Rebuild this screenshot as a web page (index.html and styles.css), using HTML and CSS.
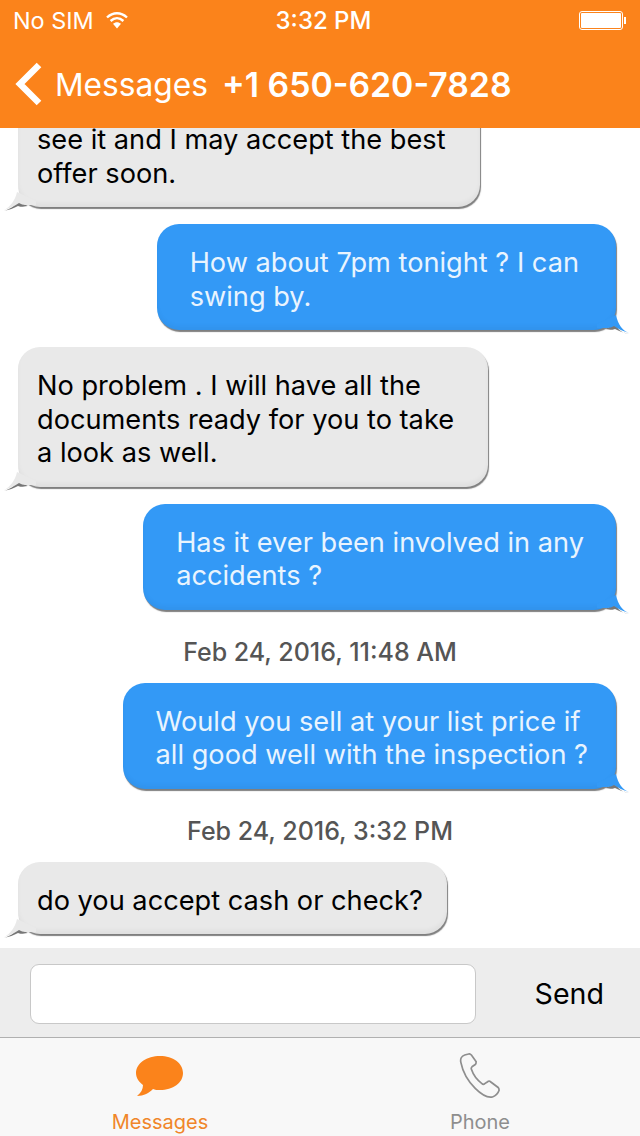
FILE: index.html
```html
<!DOCTYPE html>
<html>
<head>
    <title>Messages</title>
    <link rel="stylesheet" href="styles.css">
</head>
<body>
    <div class="phone">
        <div class="header">
            <div class="status-bar">
                <div class="status-left">
                    <span>No SIM</span>
                    <svg class="wifi" width="24" height="18" viewBox="0 0 24 18">
                        <path d="M2 6.5C8 .8 16 .8 22 6.5" fill="none" stroke="#fff" stroke-width="2.4"/>
                        <path d="M5.6 10C9.5 6.4 14.5 6.4 18.4 10" fill="none" stroke="#fff" stroke-width="2.4"/>
                        <path d="M8 12.8C10.5 10.7 13.5 10.7 16 12.8L12 17.5Z" fill="#fff"/>
                    </svg>
                </div>
                <span class="status-time">3:32 PM</span>
                <div class="battery"><div class="battery-fill"></div></div>
            </div>
            <div class="nav-bar">
                <svg class="back-icon" width="30" height="44" viewBox="0 0 30 44">
                    <path d="M25 3L6 22L25 41" fill="none" stroke="#fff" stroke-width="6.5"/>
                </svg>
                <span class="back-label">Messages</span>
                <span class="nav-title">+1 650-620-7828</span>
            </div>
        </div>

        <div class="messages">
            <div class="bubble left">
                see it and I may accept the best<br>offer soon.
                <svg class="tail" width="32" height="20" viewBox="0 0 32 20"><path class="tail-edge" d="M0 19C6 17 11 14 13 9L24 14C18 15 16 15 14 14C10 16 5 18 0 19Z"/><path d="M0 18C6 15 11 9 13 0L32 9V13H22C19 13 17 12 15 11C11 14 6 16 0 18Z" fill="#e9e9e9"/></svg>
            </div>
            <div class="bubble right wide">
                How about 7pm tonight ? I can<br>swing by.
                <svg class="tail" width="32" height="20" viewBox="0 0 32 20"><path class="tail-edge" d="M32 19C26 18 21 16 19 9L8 14C14 15 16 15 18 14C22 16 27 18 32 19Z"/><path d="M32 18C26 16 21 10 19 0L0 9V13H10C13 13 15 12 17 11C21 14 26 16 32 18Z" fill="#3399f6"/></svg>
            </div>
            <div class="bubble left">
                No problem . I will have all the<br>documents ready for you to take<br>a look as well.
                <svg class="tail" width="32" height="20" viewBox="0 0 32 20"><path class="tail-edge" d="M0 19C6 17 11 14 13 9L24 14C18 15 16 15 14 14C10 16 5 18 0 19Z"/><path d="M0 18C6 15 11 9 13 0L32 9V13H22C19 13 17 12 15 11C11 14 6 16 0 18Z" fill="#e9e9e9"/></svg>
            </div>
            <div class="bubble right">
                Has it ever been involved in any<br>accidents ?
                <svg class="tail" width="32" height="20" viewBox="0 0 32 20"><path class="tail-edge" d="M32 19C26 18 21 16 19 9L8 14C14 15 16 15 18 14C22 16 27 18 32 19Z"/><path d="M32 18C26 16 21 10 19 0L0 9V13H10C13 13 15 12 17 11C21 14 26 16 32 18Z" fill="#3399f6"/></svg>
            </div>
            <div class="time-label">Feb 24, 2016, 11:48 AM</div>
            <div class="bubble right tight">
                Would you sell at your list price if<br>all good well with the inspection ?
                <svg class="tail" width="32" height="20" viewBox="0 0 32 20"><path class="tail-edge" d="M32 19C26 18 21 16 19 9L8 14C14 15 16 15 18 14C22 16 27 18 32 19Z"/><path d="M32 18C26 16 21 10 19 0L0 9V13H10C13 13 15 12 17 11C21 14 26 16 32 18Z" fill="#3399f6"/></svg>
            </div>
            <div class="time-label">Feb 24, 2016, 3:32 PM</div>
            <div class="bubble left tight">
                do you accept cash or check?
                <svg class="tail" width="32" height="20" viewBox="0 0 32 20"><path class="tail-edge" d="M0 19C6 17 11 14 13 9L24 14C18 15 16 15 14 14C10 16 5 18 0 19Z"/><path d="M0 18C6 15 11 9 13 0L32 9V13H22C19 13 17 12 15 11C11 14 6 16 0 18Z" fill="#e9e9e9"/></svg>
            </div>
        </div>

        <div class="input-bar">
            <div class="text-input"></div>
            <span class="send">Send</span>
        </div>

        <div class="tab-bar">
            <div class="tab active">
                <svg width="50" height="44" viewBox="0 0 50 44">
                    <path d="M25 1C38 1 48 8 48 18C48 28 38 35 25 35C22 35 20 35 18 34C14 38 9 41 2 41C6 38 8 34 8 30C4 27 1 23 1 18C1 8 12 1 25 1Z" fill="#fb831b"/>
                </svg>
                <span>Messages</span>
            </div>
            <div class="tab">
                <svg width="42" height="46" viewBox="0 0 44 48">
                    <path d="M6 2C3 3 1 6 2 10C4 20 9 29 17 37C23 43 30 47 35 46C38 45 41 42 42 39C42 38 42 37 41 36L33 30C32 29 31 29 30 30L27 32C26 33 25 33 24 32C20 29 15 23 13 17C12.5 16 13 15 14 14L17 12C18 11 18 10 18 9L13 2C12 1 11 .5 10 1Z" fill="none" stroke="#8e8e8e" stroke-width="1.8"/>
                </svg>
                <span>Phone</span>
            </div>
        </div>
    </div>
</body>
</html>
```
FILE: styles.css
```css
body {
    margin: 0;
    font-family: 'Inter', 'Liberation Sans', sans-serif;
    background: white;
}

.phone {
    width: 640px;
    height: 1136px;
    display: flex;
    flex-direction: column;
    overflow: hidden;
}

/* Orange header */
.header {
    height: 128px;
    flex-shrink: 0;
    background: #fb831b;
    color: white;
}

.status-bar {
    height: 40px;
    display: grid;
    grid-template-columns: 1fr auto 1fr;
    align-items: center;
    padding: 0 17px 0 13px;
    font-size: 23.4px;
}

.status-left {
    display: flex;
    align-items: center;
    gap: 11px;
}

.status-time {
    font-size: 24px;
    font-weight: 500;
    margin-left: 11px;
}

.battery {
    justify-self: end;
    width: 44px;
    height: 19px;
    border: 1px solid white;
    border-radius: 3px;
    padding: 1px;
    box-sizing: border-box;
    position: relative;
}

.battery::after {
    content: '';
    position: absolute;
    right: -4px;
    top: 5px;
    width: 2px;
    height: 7px;
    background: white;
}

.battery-fill {
    height: 100%;
    background: white;
    border-radius: 1px;
}

.nav-bar {
    height: 88px;
    display: flex;
    align-items: center;
    padding-left: 14px;
}

.back-label {
    font-size: 31.7px;
    margin-left: 11px;
}

.nav-title {
    font-size: 33.8px;
    font-weight: 600;
    margin-left: 14px;
}

/* Conversation */
.messages {
    flex: 1;
    min-height: 0;
    overflow: hidden;
    display: flex;
    flex-direction: column;
    justify-content: flex-end;
    padding-bottom: 14px;
}

.bubble {
    flex-shrink: 0;
    position: relative;
    font-size: 27.2px;
    line-height: 33.5px;
    padding: 22px 34px 17px 19px;
    border-radius: 22px;
    margin-bottom: 17px;
    box-shadow: 1px 2px 1px rgba(0,0,0,0.5), inset 0 -4px 4px rgba(0,0,0,0.04);
}

.bubble:last-child {
    margin-bottom: 0;
}

.left {
    align-self: flex-start;
    margin-left: 18px;
    background: #e9e9e9;
    color: black;
}

.left.tight {
    padding-right: 24px;
}

.right {
    align-self: flex-end;
    margin-right: 24px;
    padding-left: 33px;
    padding-right: 32px;
    background: #3399f6;
    color: #e9f4fe;
}

.right.wide {
    padding-right: 37px;
}

.right.tight {
    padding-right: 28px;
}

.tail {
    position: absolute;
    bottom: -5px;
}

.tail-edge {
    fill: #777;
}

.left .tail {
    left: -14px;
}

.right .tail {
    right: -13px;
}

.time-label {
    flex-shrink: 0;
    text-align: center;
    font-size: 25px;
    font-weight: 500;
    line-height: 30px;
    color: #555;
    margin: 10px 0 16px;
}

/* Input */
.input-bar {
    height: 89px;
    flex-shrink: 0;
    background: #ededed;
    display: flex;
    align-items: center;
    padding: 2px 36px 0 30px;
    justify-content: space-between;
    box-sizing: border-box;
}

.text-input {
    width: 446px;
    height: 60px;
    box-sizing: border-box;
    background: white;
    border: 1px solid #c8c8c8;
    border-radius: 9px;
}

.send {
    font-size: 28.6px;
    color: black;
}

/* Tabs */
.tab-bar {
    height: 99px;
    flex-shrink: 0;
    box-sizing: border-box;
    display: flex;
    background: #f8f8f8;
    border-top: 1px solid #b0b0b0;
}

.tab {
    flex: 1;
    display: flex;
    flex-direction: column;
    align-items: center;
    justify-content: flex-end;
    gap: 11px;
    font-size: 20px;
    color: #8e8e8e;
    padding-bottom: 2px;
}

.tab svg {
    display: block;
}

.tab.active {
    color: #f0862a;
}
```
